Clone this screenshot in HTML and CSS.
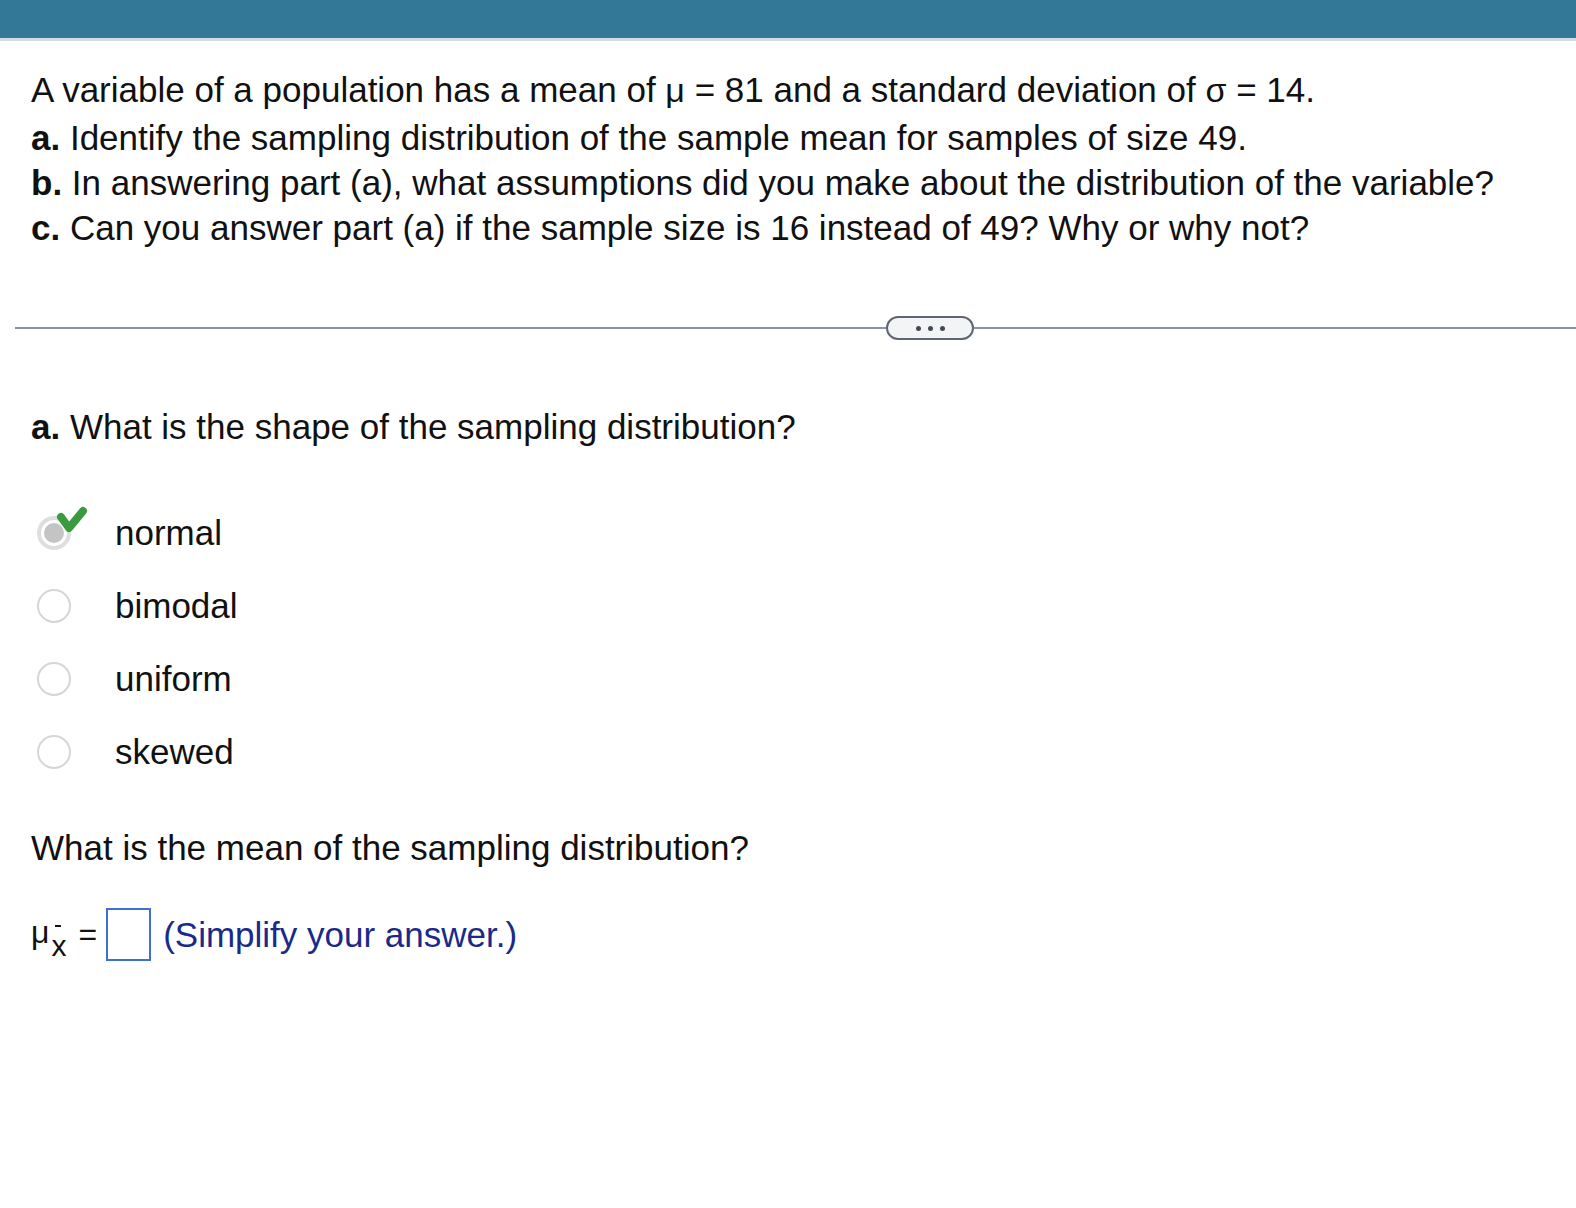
FILE: index.html
```html
<!DOCTYPE html>
<html>
<head>
<meta charset="utf-8">
<link rel="stylesheet" href="styles.css">
</head>
<body>
<div class="topbar"></div>
<div class="question">
  <p class="line">A variable of a population has a mean of <span class="sym">μ</span> = 81 and a standard deviation of <span class="sym">σ</span> = 14.</p>
  <p class="line"><b>a.</b> Identify the sampling distribution of the sample mean for samples of size 49.</p>
  <p class="line"><b>b.</b> In answering part (a), what assumptions did you make about the distribution of the variable?</p>
  <p class="line"><b>c.</b> Can you answer part (a) if the sample size is 16 instead of 49? Why or why not?</p>
</div>
<div class="divider">
  <div class="rule"></div>
  <div class="more"><span></span><span></span><span></span></div>
  <div class="rule right"></div>
</div>
<div class="answer">
  <p class="prompt"><b>a.</b> What is the shape of the sampling distribution?</p>
  <ul class="options">
    <li class="opt">
      <span class="radio checked">
        <svg class="check" width="32" height="30" viewBox="0 0 32 30"><path d="M5 12 L13 23 L27 6" fill="none" stroke="#3a9a3e" stroke-width="8" stroke-linejoin="round" stroke-linecap="round"/></svg>
      </span>
      <span class="label">normal</span>
    </li>
    <li class="opt"><span class="radio"></span><span class="label">bimodal</span></li>
    <li class="opt"><span class="radio"></span><span class="label">uniform</span></li>
    <li class="opt"><span class="radio"></span><span class="label">skewed</span></li>
  </ul>
  <p class="prompt mean">What is the mean of the sampling distribution?</p>
  <div class="entry">
    <span class="mu">μ</span><span class="sub">x</span>
    <span class="eq">=</span>
    <span class="box"></span>
    <span class="hint">(Simplify your answer.)</span>
  </div>
</div>
</body>
</html>
```

FILE: styles.css
```css
html, body {
  margin: 0;
  padding: 0;
  background: #ffffff;
}
body {
  font-family: "Liberation Sans", Arial, sans-serif;
  color: #111111;
  width: 1576px;
}
.topbar {
  height: 38px;
  background: #337896;
  border-bottom: 3px solid #d4dbe3;
}
.question {
  padding: 26px 0 0 31px;
}
.line {
  margin: 0;
  font-size: 35px;
  line-height: 45px;
  height: 45px;
}
.line:first-child {
  margin-bottom: 3px;
}
.sym {
  font-size: 34px;
}
.divider {
  display: flex;
  align-items: center;
  margin: 66px 0 0 15px;
  height: 24px;
}
.rule {
  height: 2px;
  background: #8a93a6;
  width: 871px;
}
.rule.right {
  flex: 1;
}
.more {
  width: 84px;
  height: 20px;
  border: 2px solid #5f6673;
  border-radius: 12px;
  background: #f3f4f6;
  display: flex;
  justify-content: center;
  align-items: center;
  gap: 7px;
}
.more span {
  width: 5px;
  height: 5px;
  border-radius: 50%;
  background: #444a55;
}
.answer {
  padding: 64px 0 0 31px;
}
.prompt {
  margin: 0;
  font-size: 35px;
  line-height: 45px;
}
.options {
  list-style: none;
  margin: 47px 0 0 0;
  padding: 0;
}
.opt {
  display: flex;
  align-items: center;
  height: 73px;
}
.radio {
  position: relative;
  width: 30px;
  height: 30px;
  border: 2px solid #d6d6d6;
  border-radius: 50%;
  margin-left: 6px;
  box-sizing: content-box;
  flex: none;
}
.radio.checked {
  border: 4px solid #dedede;
  width: 26px;
  height: 26px;
}
.radio.checked::before {
  content: "";
  position: absolute;
  left: 3px;
  top: 3px;
  width: 20px;
  height: 20px;
  border-radius: 50%;
  background: #c4c4c4;
}
.check {
  position: absolute;
  left: 15px;
  top: -15px;
}
.label {
  font-size: 35px;
  margin-left: 44px;
}
.mean {
  margin-top: 37px;
}
.entry {
  display: flex;
  align-items: center;
  margin-top: 38px;
  font-size: 35px;
}
.mu {
  font-size: 32px;
  line-height: 40px;
  margin-top: -6px;
}
.sub {
  position: relative;
  font-size: 30px;
  line-height: 30px;
  margin-top: 22px;
  margin-left: 2px;
}
.sub::before {
  content: "";
  position: absolute;
  left: 4px;
  top: -6px;
  width: 6px;
  height: 2px;
  background: #111111;
}
.eq {
  font-size: 32px;
  margin-left: 12px;
}
.box {
  width: 45px;
  height: 53px;
  border: 2px solid #3f6fd0;
  margin-left: 9px;
  box-sizing: border-box;
}
.hint {
  color: #1a2a8a;
  margin-left: 12px;
}
```
